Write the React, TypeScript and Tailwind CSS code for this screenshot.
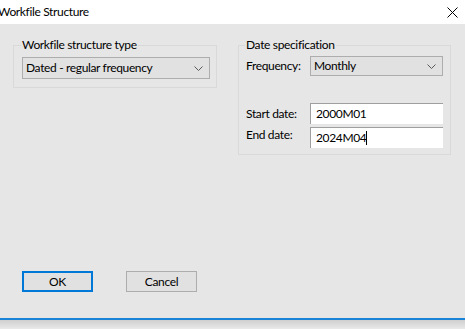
import React from 'react';

const font = { fontFamily: 'Lato, "Noto Sans", sans-serif' };

const Chevron = () => (
    <svg width="9" height="5" viewBox="0 0 9 5" className="shrink-0">
        <path d="M0.5 0.5 L4.5 4.5 L8.5 0.5" fill="none" stroke="#5a5a5a" strokeWidth="1" />
    </svg>
);

const Select = ({ value, className }: { value: string; className: string }) => (
    <div className={`flex items-center justify-between border border-[#adadad] bg-[#e1e1e1] pl-[3px] pr-[6px] ${className}`}>
        <span>{value}</span>
        <Chevron />
    </div>
);

const Field = ({ value, caret }: { value: string; caret?: boolean }) => (
    <div className="flex items-center w-[133px] h-[21px] bg-white border-t border-l border-[#9f9f9f] border-r-[#e3e3e3] border-b-[#e3e3e3] pl-[5px]">
        <span>{value}</span>
        {caret && <span className="w-px h-[14px] bg-black" />}
    </div>
);

export default function App() {
    return (
        <div className="w-[465px] h-[329px] flex flex-col text-[12px] tracking-[-0.35px] text-black bg-[#e6e6e6] overflow-hidden" style={font}>
            <div className="h-[24px] bg-white flex items-center justify-between shrink-0">
                <span className="ml-[-2px] leading-[16px]">Workfile Structure</span>
                <svg width="11" height="11" viewBox="0 0 11 11" className="mr-[7px]">
                    <path d="M0.5 0.5 L10.5 10.5 M10.5 0.5 L0.5 10.5" stroke="#000" strokeWidth="1" />
                </svg>
            </div>

            <div className="h-[294px] flex flex-col shrink-0">
                <div className="flex items-start pt-[14px] pl-[13px]">
                    <fieldset className="w-[204px] h-[50px] border border-[#d9d9d9] pl-[8px]">
                        <legend className="ml-[-1px] px-[1px] leading-[14px]">Workfile structure type</legend>
                        <Select value="Dated - regular frequency" className="mt-[5px] w-[188px] h-[22px]" />
                    </fieldset>

                    <fieldset className="ml-[21px] w-[213px] h-[117px] border border-[#d9d9d9] pl-[7px]">
                        <legend className="ml-[-1px] px-[1px] leading-[14px]">Date specification</legend>
                        <div className="flex items-center mt-[4px]">
                            <span className="w-[64px]">Frequency:</span>
                            <Select value="Monthly" className="w-[133px] h-[20px]" />
                        </div>
                        <div className="flex items-center mt-[27px]">
                            <span className="w-[64px]">Start date:</span>
                            <Field value="2000M01" />
                        </div>
                        <div className="flex items-start mt-[3px]">
                            <span className="w-[64px] leading-[16px]">End date:</span>
                            <Field value="2024M04" caret />
                        </div>
                    </fieldset>
                </div>

                <div className="flex mt-auto mb-[26px] pl-[22px] gap-[33px]">
                    <button className="w-[71px] h-[21px] border-2 border-[#0078d7] bg-[#e1e1e1] flex items-center justify-center">OK</button>
                    <button className="w-[71px] h-[21px] border border-[#adadad] bg-[#e1e1e1] flex items-center justify-center">Cancel</button>
                </div>
            </div>

            <div className="h-[2px] bg-[#1883d7] shrink-0" />
            <div className="flex-1 bg-gradient-to-b from-[#cfcfcf] to-[#e9e9e9]" />
        </div>
    );
}
